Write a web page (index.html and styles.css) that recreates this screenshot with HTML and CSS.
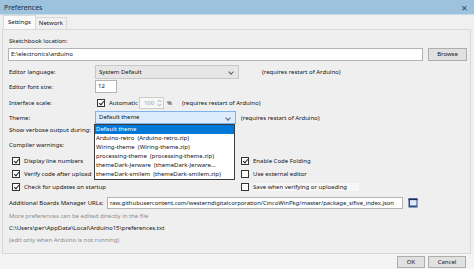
FILE: index.html
```html
<!DOCTYPE html>
<html lang="en">
<head>
    <meta charset="UTF-8">
    <title>Preferences</title>
    <link rel="stylesheet" href="styles.css">
</head>
<body>
    <div class="window">
        <div class="titlebar">
            <span class="title">Preferences</span>
            <span class="close">&#x2715;</span>
        </div>

        <div class="tabs">
            <div class="tab active">Settings</div>
            <div class="tab">Network</div>
        </div>

        <div class="panel">
            <div class="row r-label">Sketchbook location:</div>
            <div class="row r-path">
                <div class="field path">E:\electronics\arduino</div>
                <div class="btn browse">Browse</div>
            </div>

            <div class="row r-lang">
                <span class="lbl">Editor language:</span>
                <div class="select lang">System Default<span class="arrow"></span></div>
                <span class="note note-lang">(requires restart of Arduino)</span>
            </div>

            <div class="row r-font">
                <span class="lbl">Editor font size:</span>
                <div class="field size">12</div>
            </div>

            <div class="row r-scale">
                <span class="lbl">Interface scale:</span>
                <span class="check on"></span>
                <span class="check-text">Automatic</span>
                <div class="spinner">100
                    <svg class="spin" width="5" height="8" viewBox="0 0 5 8">
                        <path d="M0.5 3.2 L2.5 1 L4.5 3.2" fill="none" stroke="#9a9a9a" stroke-width="0.8"/>
                        <path d="M0.5 4.8 L2.5 7 L4.5 4.8" fill="none" stroke="#9a9a9a" stroke-width="0.8"/>
                    </svg>
                </div>
                <span class="pct">%</span>
                <span class="note note-scale">(requires restart of Arduino)</span>
            </div>

            <div class="row r-theme">
                <span class="lbl">Theme:</span>
                <div class="select theme">Default theme<span class="arrow"></span></div>
                <span class="note note-theme">(requires restart of Arduino)</span>
            </div>

            <div class="row r-verbose">
                <span class="lbl">Show verbose output during:</span>
            </div>

            <div class="row r-warn">
                <span class="lbl">Compiler warnings:</span>
            </div>

            <div class="checks">
                <div class="opt"><span class="check on"></span>Display line numbers</div>
                <div class="opt"><span class="check on"></span>Enable Code Folding</div>
                <div class="opt"><span class="check on"></span>Verify code after upload</div>
                <div class="opt"><span class="check"></span>Use external editor</div>
                <div class="opt"><span class="check on"></span>Check for updates on startup</div>
                <div class="opt"><span class="check"></span><span class="hl">Save when verifying or uploading</span></div>
            </div>

            <div class="row r-urls">
                <span class="lbl lbl-urls">Additional Boards Manager URLs:</span>
                <div class="field urls">raw.githubusercontent.com/westerndigitalcorporation/CincoWinPkg/master/package_sifive_index.json</div>
                <svg class="win-icon" width="10" height="10" viewBox="0 0 10 10">
                    <rect x="0.5" y="0.5" width="9" height="9" fill="#2c4f86"/>
                    <rect x="2" y="2" width="6.5" height="5.5" fill="#dfe8f5"/>
                    <rect x="0.5" y="0.5" width="9" height="1.6" fill="#16335f"/>
                </svg>
            </div>

            <div class="row r-small gray">More preferences can be edited directly in the file</div>
            <div class="row r-small">C:\Users\per\AppData\Local\Arduino15\preferences.txt</div>
            <div class="row r-small gray">(edit only when Arduino is not running)</div>

            <!-- offene Theme-Liste liegt über den Zeilen darunter -->
            <div class="droplist">
                <div class="item sel">Default theme</div>
                <div class="item">Arduino-retro&nbsp; (Arduino-retro.zip)</div>
                <div class="item">Wiring-theme&nbsp; (Wiring-theme.zip)</div>
                <div class="item">processing-theme&nbsp; (processing-theme.zip)</div>
                <div class="item">themeDark-Jerware&nbsp; (themeDark-Jerware...</div>
                <div class="item">themeDark-smilem&nbsp; (themeDark-smilem.zip)</div>
            </div>
        </div>

        <div class="footer">
            <div class="btn ok">OK</div>
            <div class="btn cancel">Cancel</div>
        </div>
    </div>
</body>
</html>
```

FILE: styles.css
```css
body {
    margin: 0;
    background-color: #f0f0f0;
    font-family: "Noto Sans", "Open Sans", sans-serif;
    font-size: 6px;
    color: #141414;
}

.window {
    width: 474px;
    height: 269px;
    background-color: #f0f0f0;
    overflow: hidden;
}

.titlebar {
    height: 15px;
    display: flex;
    align-items: center;
    justify-content: space-between;
    padding: 0 6px 0 4px;
    background-color: #9dc2dd;
    border-bottom: 1px solid #c4dbec;
    box-sizing: border-box;
}

.title {
    font-size: 6.9px;
    color: #1c2d40;
}

.close {
    font-size: 8px;
    color: #34475a;
}

.tabs {
    height: 14px;
    display: flex;
    align-items: flex-end;
    padding-left: 3px;
}

.tab {
    height: 11px;
    line-height: 11px;
    padding: 0 3px;
    border: 1px solid #d9d9d9;
    border-bottom: none;
    background-color: #f0f0f0;
    margin-left: -1px;
}

.tab.active {
    height: 13px;
    line-height: 13px;
    background-color: #fafafa;
    margin-left: 0;
    padding: 0 4px;
}

.panel {
    position: relative;
    margin: 0 3px 0 2px;
    height: 225px;
    box-sizing: border-box;
    border: 1px solid #d9d9d9;
    padding: 4px 0 0 6px;
    background-color: #efefef;
}

.row {
    display: flex;
    align-items: center;
    white-space: nowrap;
}

.lbl {
    width: 86px;
    flex-shrink: 0;
}

.r-label { height: 13px; }
.r-path { height: 15px; }
.r-lang { height: 16px; margin-top: 2px; }
.r-font { height: 13px; }
.r-scale { height: 16px; margin-top: 2px; }
.r-theme { height: 13px; }
.r-verbose { height: 12px; }
.r-warn { height: 18px; }
.r-urls { height: 14px; margin-top: 3px; }
.r-small { height: 12px; }

.gray {
    color: #8c8c8c;
}

.field {
    height: 13px;
    line-height: 11px;
    box-sizing: border-box;
    border: 1px solid #b4b4b4;
    background-color: #ffffff;
    padding-left: 2px;
    white-space: nowrap;
    overflow: hidden;
}

.field.path {
    width: 415px;
    margin-left: -1px;
}

.field.size {
    width: 22px;
}

.field.urls {
    width: 296px;
    height: 12px;
    line-height: 10px;
    font-size: 5.9px;
}

.lbl-urls {
    width: 98px;
}

.win-icon {
    margin-left: 5px;
}

.btn {
    height: 13px;
    line-height: 11px;
    box-sizing: border-box;
    border: 1px solid #adadad;
    background-color: #e1e1e1;
    text-align: center;
}

.browse {
    width: 39px;
    margin-left: 5px;
}

.select {
    position: relative;
    height: 14px;
    line-height: 12px;
    box-sizing: border-box;
    border: 1px solid #c8c8c8;
    background-color: #e6e6e6;
    padding-left: 3px;
}

.select.lang {
    width: 144px;
}

.select.theme {
    width: 141px;
    height: 13px;
    line-height: 11px;
    border-color: #7eb4ea;
    background-color: #dcecfc;
}

.arrow {
    position: absolute;
    right: 5px;
    top: 3.5px;
    width: 3px;
    height: 3px;
    border-right: 1px solid #606060;
    border-bottom: 1px solid #606060;
    transform: rotate(45deg);
}

.note-lang { margin-left: 23px; }
.note-scale { margin-left: 10px; }
.note-theme { margin-left: 5px; }

.check {
    display: inline-block;
    width: 8px;
    height: 8px;
    box-sizing: border-box;
    border: 1px solid #333333;
    background-color: #ffffff;
    flex-shrink: 0;
    position: relative;
}

.check.on::after {
    content: "";
    position: absolute;
    left: 1.6px;
    top: 0;
    width: 2px;
    height: 4px;
    border-right: 1px solid #222222;
    border-bottom: 1px solid #222222;
    transform: rotate(40deg);
}

.r-scale .check {
    margin-left: 2px;
}

.check-text {
    margin-left: 4px;
}

.spinner {
    display: flex;
    align-items: center;
    justify-content: space-between;
    width: 25px;
    height: 12px;
    box-sizing: border-box;
    border: 1px solid #cccccc;
    background-color: #f7f7f7;
    color: #a0a0a0;
    padding: 0 1px 0 4px;
    margin-left: 1px;
}

.pct {
    margin-left: 3px;
}

.checks {
    display: grid;
    grid-template-columns: 229px 1fr;
    grid-auto-rows: 13px;
    padding-left: 3px;
}

.checks .opt:nth-child(5),
.checks .opt:nth-child(6) {
    height: 14px;
}

.opt {
    display: flex;
    align-items: center;
    white-space: nowrap;
}

.opt .check {
    margin-right: 4px;
}

.hl {
    background-color: #f7f7f7;
    padding-right: 12px;
}

.droplist {
    position: absolute;
    left: 91px;
    top: 94px;
    width: 141px;
    box-sizing: border-box;
    border: 1px solid #3c3c3c;
    background-color: #ffffff;
}

.item {
    height: 9px;
    line-height: 9px;
    padding-left: 1px;
    white-space: nowrap;
    overflow: hidden;
}

.item.sel {
    background-color: #0078d7;
    color: #ffffff;
}

.footer {
    height: 15px;
    display: flex;
    justify-content: flex-end;
    align-items: center;
    gap: 3px;
    padding-right: 8px;
    background-color: #f4f4f4;
}

.ok {
    width: 28px;
    height: 12px;
}

.cancel {
    width: 38px;
    height: 12px;
}
```
